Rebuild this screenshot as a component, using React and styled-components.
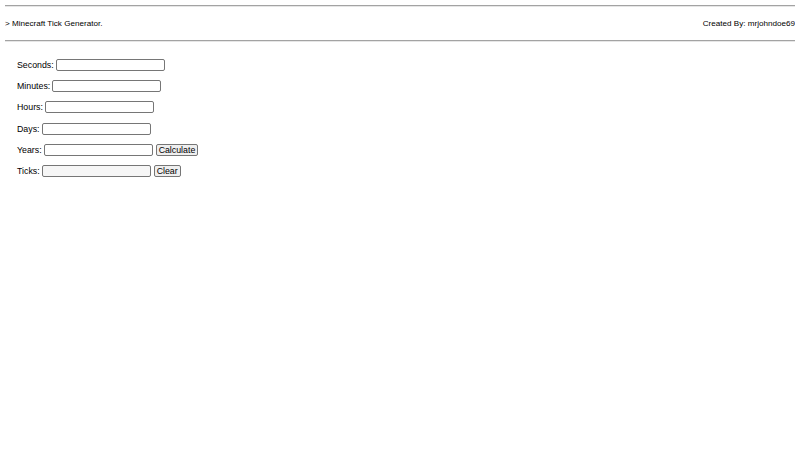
import React from 'react';
import styled, { createGlobalStyle } from 'styled-components';

const GlobalStyle = createGlobalStyle`
  body {
    margin: 5px;
    font-family: "Liberation Sans", Arial, sans-serif;
    color: #000;
    background: #fff;
  }
`;

const Rule = styled.div`
  height: 0;
  border-top: 1px solid #a3a3a3;
  border-bottom: 1px solid #e6e6e6;
`;

const Header = styled.header`
  display: flex;
  justify-content: space-between;
  align-items: center;
  height: 33px;
  font-size: 8.1px;
`;

const Form = styled.form`
  display: flex;
  flex-direction: column;
  padding: 12px 0 0 12px;
`;

const Row = styled.div`
  display: flex;
  align-items: center;
  gap: 2px;
  height: 21.3px;
  font-size: 8.8px;
`;

const Field = styled.input`
  box-sizing: border-box;
  width: 109px;
  height: 12px;
  margin: 0;
  padding: 0 2px;
  font-family: inherit;
  font-size: 9px;
  border: 1px solid #767676;
  border-radius: 2px;
  background: ${(p) => (p.readOnly ? '#f6f6f6' : '#fff')};
`;

const Btn = styled.button`
  box-sizing: border-box;
  height: 12px;
  margin-left: 1px;
  padding: 0 2px;
  font-family: inherit;
  font-size: 8.8px;
  line-height: 10px;
  color: #000;
  background: #efefef;
  border: 1px solid #767676;
  border-radius: 2px;
`;

const fields = ['Seconds', 'Minutes', 'Hours', 'Days'];

export default class App extends React.Component {
  constructor(props) {
    super(props);
    this.state = { Seconds: '', Minutes: '', Hours: '', Days: '', Years: '', ticks: '' };
  }

  calculate() {
    const s = this.state;
    const total =
      (Number(s.Seconds) || 0) +
      (Number(s.Minutes) || 0) * 60 +
      (Number(s.Hours) || 0) * 3600 +
      (Number(s.Days) || 0) * 86400 +
      (Number(s.Years) || 0) * 31536000;
    this.setState({ ticks: String(total * 20) });
  }

  clear() {
    this.setState({ Seconds: '', Minutes: '', Hours: '', Days: '', Years: '', ticks: '' });
  }

  render() {
    return (
      <>
        <GlobalStyle />
        <Rule />
        <Header>
          <span>&gt; Minecraft Tick Generator.</span>
          <span>Created By: mrjohndoe69</span>
        </Header>
        <Rule />
        <Form onSubmit={(e) => e.preventDefault()}>
          {fields.map((f) => (
            <Row key={f}>
              <label>{f}:</label>
              <Field value={this.state[f]} onChange={(e) => this.setState({ [f]: e.target.value })} />
            </Row>
          ))}
          <Row>
            <label>Years:</label>
            <Field value={this.state.Years} onChange={(e) => this.setState({ Years: e.target.value })} />
            <Btn type="button" onClick={this.calculate.bind(this)}>Calculate</Btn>
          </Row>
          <Row>
            <label>Ticks:</label>
            <Field readOnly value={this.state.ticks} />
            <Btn type="button" onClick={this.clear.bind(this)}>Clear</Btn>
          </Row>
        </Form>
      </>
    );
  }
}
